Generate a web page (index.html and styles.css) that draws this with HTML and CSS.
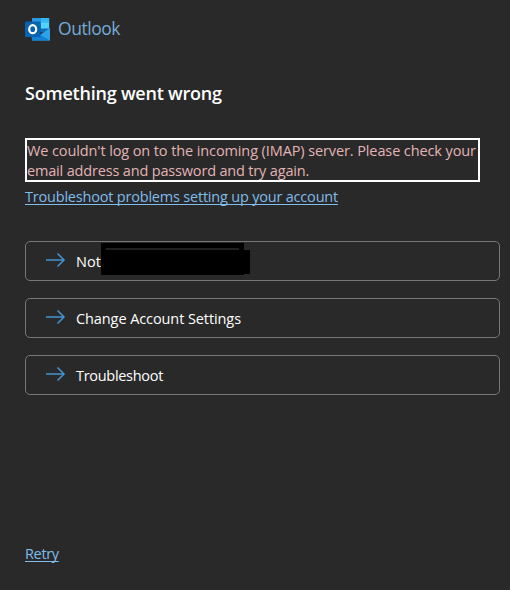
FILE: index.html
```html
<!DOCTYPE html>
<html lang="en">
<head>
<meta charset="utf-8">
<title>Outlook</title>
<link rel="stylesheet" href="styles.css">
</head>
<body>
<main class="dialog">
  <header class="brand">
    <svg class="logo" width="25" height="24" viewBox="0 0 25 24">
      <path fill="#1769b5" d="M7 1h17.500v14H7z"/>
      <path fill="#2998e3" d="M7 1h9v6H7z"/>
      <path fill="#35b8f1" d="M16 1h8v6h-8z"/>
      <path fill="#1681d6" d="M7 7h9v6H7z"/>
      <path fill="#52d5fa" d="M16 5.500h8v6h-8z"/>
      <path fill="#126dbc" d="M13 12h10l-6 4z"/>
      <path fill="#2aa5e9" d="M25 11v12.500H7z"/>
      <path fill="#1482d4" d="M6 12l19 11.500H7z"/>
      <rect fill="#0862b2" y="4.500" width="15.500" height="15.500" rx="1"/>
      <ellipse cx="7.700" cy="12.200" rx="3.500" ry="4" fill="none" stroke="#fff" stroke-width="2.200"/>
    </svg>
    <span class="brand-name">Outlook</span>
  </header>
  <h1 class="title">Something went wrong</h1>
  <p class="error"><span class="error-first">We couldn't log on to the incoming (IMAP) server. Please check your</span><br><span class="error-second">email address and password and try again.</span></p>
  <a class="link help" href="#">Troubleshoot problems setting up your account</a>
  <div class="actions">
    <button class="action"><svg class="arrow" width="20" height="16" viewBox="0 0 20 16"><path d="M0 8h18M11.500 1.500L18 8l-6.500 6.500"/></svg><span class="label label-not">Not</span><span class="redaction"></span></button>
    <button class="action"><svg class="arrow" width="20" height="16" viewBox="0 0 20 16"><path d="M0 8h18M11.500 1.500L18 8l-6.500 6.500"/></svg><span class="label label-change">Change Account Settings</span></button>
    <button class="action"><svg class="arrow" width="20" height="16" viewBox="0 0 20 16"><path d="M0 8h18M11.500 1.500L18 8l-6.500 6.500"/></svg><span class="label label-trouble">Troubleshoot</span></button>
  </div>
  <a class="link retry" href="#">Retry</a>
</main>
</body>
</html>
```

FILE: styles.css
```css
* { box-sizing: border-box; }
body {
  margin: 0;
  background: #292929;
  color: #fff;
  font: 14.5px/20px "Open Sans", "Noto Sans", sans-serif;
}
.dialog {
  display: flex;
  flex-direction: column;
  align-items: flex-start;
  width: 510px;
  height: 590px;
  padding: 16px 10px 0 25px;
  white-space: nowrap;
}
.brand { display: flex; align-items: center; gap: 8px; height: 25px; }
.brand-name { padding-bottom: 1px; color: #75a9d8; font-size: 17.5px; font-weight: 400; letter-spacing: -0.45px; }
.title { margin: 39px 0 0; font-size: 18px; line-height: 26px; font-weight: 600; letter-spacing: -0.22px; }
.error {
  width: 455px;
  height: 44px;
  margin: 32px 0 0;
  padding-top: 1px;
  border: 2px solid #fff;
  color: #e2b4b5;
}
.error-first { letter-spacing: -0.105px; }
.error-second { letter-spacing: -0.17px; }
.link {
  color: #7fbdec;
  text-decoration: underline;
  text-decoration-thickness: 1px;
  text-underline-offset: 2px;
  text-decoration-skip-ink: none;
}
.help { margin-top: 5px; letter-spacing: -0.2px; }
.actions { display: flex; flex-direction: column; gap: 17px; width: 475px; margin-top: 34px; }
.action {
  position: relative;
  display: flex;
  align-items: center;
  height: 40px;
  padding: 0 0 0 20px;
  border: 1px solid #777;
  border-radius: 5px;
  background: transparent;
  color: #fff;
  font: inherit;
}
.arrow { margin: -2px 10px 0 0; fill: none; stroke: #4294cf; stroke-width: 1.5; }
.label { padding-top: 2px; }
.label-change { letter-spacing: -0.09px; }
.label-trouble { letter-spacing: -0.3px; }
.redaction {
  position: absolute;
  left: 75px;
  top: 1px;
  width: 149px;
  height: 32px;
  background: #000;
  clip-path: polygon(0 0, 143px 0, 143px 7px, 149px 7px, 149px 31px, 143px 31px, 143px 32px, 0 32px);
}
.redaction::before {
  content: "";
  position: absolute;
  left: 5px;
  top: 5px;
  width: 133px;
  height: 2px;
  background: #202020;
}
.retry { margin-top: 149px; letter-spacing: -0.35px; }
```
